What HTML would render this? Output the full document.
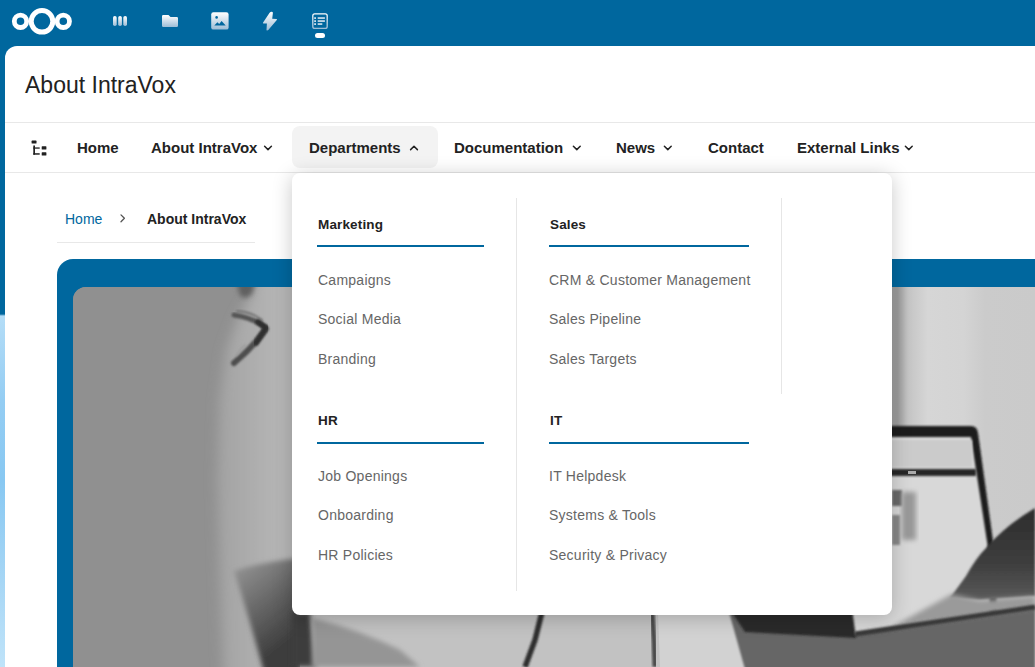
<!DOCTYPE html>
<html><head><meta charset="utf-8">
<style>
*{box-sizing:border-box;margin:0;padding:0}
html,body{width:1035px;height:667px;overflow:hidden;background:#00679e;font-family:"Liberation Sans",sans-serif}
#strip{position:absolute;left:0;top:0;width:5px;height:667px;background:linear-gradient(#00679e 0,#00679e 314px,#b4ddf7 316px,#94cdf3 400px,#88c8f2 480px,#a6d6f5 580px,#bfe3f9 667px)}
#hdr{position:absolute;left:0;top:0;width:1035px;height:46px;background:#00679e}
#main{position:absolute;left:5px;top:46px;width:1030px;height:621px;background:#fff;border-top-left-radius:12px;overflow:hidden}
.abs{position:absolute;white-space:nowrap}
#title{left:20px;top:24px;font-size:23px;color:#222;line-height:30px}
#line1{left:0;top:76px;width:1030px;height:1px;background:#e8e8e8}
#line2{left:0;top:126px;width:1030px;height:1px;background:#e8e8e8}
.nav{top:93px;font-size:15px;font-weight:700;color:#222;line-height:18px}
.chev{position:absolute;top:0}
#deptbg{left:287px;top:80px;width:146px;height:42px;background:#f3f3f3;border-radius:8px}
#crumbs{}
#hero{left:52px;top:213px;width:1100px;height:500px;background:#00679e;border-radius:16px}
#photo{left:68px;top:241px;width:1100px;height:500px;background:#8e8e8e;border-top-left-radius:13px;overflow:hidden}
#dd{position:absolute;left:292px;top:173px;width:600px;height:442px;background:#fff;border-radius:8px;box-shadow:0 3px 20px rgba(0,0,0,.22)}
.hd{position:absolute;font-size:13.5px;font-weight:700;color:#222;line-height:16px;letter-spacing:.15px}
.ul{position:absolute;height:2px;background:#00679e}
.it{position:absolute;font-size:14px;color:#666;line-height:17px;white-space:nowrap;letter-spacing:.25px}
.sep{position:absolute;width:1px;background:#e6e6e6}
</style></head><body>
<div id="strip"></div>
<div id="hdr">
<svg width="1035" height="46" style="position:absolute;left:0;top:0">
<defs><linearGradient id="ig" x1="0" y1="0" x2="0" y2="1"><stop offset="0" stop-color="#ffffff"/><stop offset="1" stop-color="#9dbdd6"/></linearGradient><linearGradient id="rbg" gradientUnits="userSpaceOnUse" x1="892" y1="0" x2="1035" y2="0"><stop offset="0" stop-color="#a0a0a0"/><stop offset="0.04" stop-color="#9c9c9c"/><stop offset="0.11" stop-color="#c4c4c4"/><stop offset="0.25" stop-color="#d6d6d6"/><stop offset="0.5" stop-color="#d4d4d4"/><stop offset="0.65" stop-color="#cbcbcb"/><stop offset="1" stop-color="#cacaca"/></linearGradient>
</defs>
<g fill="none" stroke="#fff">
<circle cx="42" cy="21.3" r="10.8" stroke-width="5"/>
<circle cx="20.5" cy="21.3" r="6.2" stroke-width="4.8"/>
<circle cx="63.3" cy="21.3" r="6.2" stroke-width="4.8"/>
</g>
<g fill="url(#ig)">
<rect x="113" y="16" width="3.7" height="10" rx="1.8"/>
<rect x="118.2" y="16" width="3.7" height="10" rx="1.8"/>
<rect x="123.3" y="16" width="3.7" height="10" rx="1.8"/>
</g>
<path d="M162 16.2 Q162 15 163.2 15 L168.5 15 L170.5 17 L176.8 17 Q178 17 178 18.2 L178 25.8 Q178 27 176.8 27 L163.2 27 Q162 27 162 25.8 Z" fill="url(#ig)"/>
<rect x="211.2" y="12.3" width="17.4" height="17.3" rx="2.2" fill="url(#ig)"/>
<circle cx="216.6" cy="17.4" r="1.3" fill="#00679e"/>
<path d="M214.3 25.6 L217.4 22.2 L219.2 24.1 L221.6 21 L225.7 25.6 Z" fill="#00679e"/>
<path d="M269.6 12.8 Q270.4 11.7 271.6 11.7 Q273 11.7 272.9 12.9 L272.2 18.7 L276.3 19 Q277.5 19.1 276.8 20 L268.3 30 Q267 31 266.5 29.9 L266.9 23.6 L263.6 23.5 Q262.5 23.4 263.1 22.6 Z" fill="url(#ig)"/>
<rect x="312.8" y="13.8" width="14.4" height="14.6" rx="2" fill="none" stroke="url(#ig)" stroke-width="1.3"/>
<g fill="#e6eef5">
<rect x="314.2" y="17.3" width="1.8" height="1.6"/>
<rect x="314.2" y="20.3" width="1.8" height="1.6"/>
<rect x="314.2" y="23.3" width="1.8" height="1.6"/>
<rect x="317.7" y="17.3" width="7.2" height="1.5"/>
<rect x="317.7" y="20.3" width="7.2" height="1.5"/>
<rect x="317.7" y="23.3" width="4.6" height="1.5"/>
</g>
<rect x="315" y="33" width="10" height="5" rx="2.5" fill="#fff"/>
</svg>
</div>
<div id="main">
  <div class="abs" id="title">About IntraVox</div>
  <div class="abs" id="line1"></div>
  <div class="abs" id="deptbg"></div>
  <div class="abs" id="line2"></div>
<svg class="abs" style="left:0;top:0" width="1030" height="130">
<g fill="#222">
<rect x="26.6" y="94.6" width="4.9" height="3" rx=".6"/>
<rect x="28.3" y="99.5" width="1.7" height="9.2"/>
<rect x="28.3" y="101.4" width="6.4" height="1.3"/>
<rect x="28.3" y="107.2" width="6.4" height="1.5"/>
<rect x="36.7" y="100.2" width="4.7" height="3.4" rx=".6"/>
<rect x="36.7" y="106.2" width="4.7" height="3.4" rx=".6"/>
</g>
<g fill="none" stroke="#222" stroke-width="1.5" stroke-linecap="round" stroke-linejoin="round">
<path d="M259.6 100.3 L263 103.6 L266.4 100.3"/>
<path d="M405.6 103.6 L409 100.2 L412.4 103.6"/>
<path d="M568.4 100.3 L571.8 103.6 L575.2 100.3"/>
<path d="M659.4 100.3 L662.8 103.6 L666.2 100.3"/>
<path d="M900.4 100.3 L903.8 103.6 L907.2 100.3"/>
</g>
</svg>
  <div class="abs nav" style="left:72px">Home</div>
  <div class="abs nav" style="left:146px">About IntraVox</div>
  <div class="abs nav" style="left:304px">Departments</div>
  <div class="abs nav" style="left:449px">Documentation</div>
  <div class="abs nav" style="left:611px">News</div>
  <div class="abs nav" style="left:703px">Contact</div>
  <div class="abs nav" style="left:792px">External Links</div>
  <div class="abs" style="left:60px;top:165px;font-size:14px;color:#00679e;line-height:17px">Home</div>
  <svg class="abs" style="left:110px;top:165px" width="12" height="17"><path d="M6 3.9 L9.4 7.3 L6 10.7" fill="none" stroke="#555" stroke-width="1.3" stroke-linecap="round" stroke-linejoin="round"/></svg>
  <div class="abs" style="left:142px;top:165px;font-size:14px;font-weight:700;color:#222;line-height:17px">About IntraVox</div>
  <div class="abs" style="left:52px;top:196px;width:198px;height:1px;background:#e8e8e8"></div>
  <div class="abs" id="hero"></div>
  <div class="abs" id="photo"><svg width="962" height="380" style="position:absolute;left:0;top:0">
<defs>
<filter id="b1" x="-20%" y="-20%" width="140%" height="140%"><feGaussianBlur stdDeviation="1.2"/></filter>
<filter id="b2" x="-20%" y="-20%" width="140%" height="140%"><feGaussianBlur stdDeviation="2.5"/></filter>
<filter id="b4" x="-50%" y="-20%" width="200%" height="140%"><feGaussianBlur stdDeviation="6"/></filter>
<linearGradient id="face" x1="0" y1="0" x2="1" y2="0"><stop offset="0" stop-color="#a2a2a2"/><stop offset="0.35" stop-color="#b8b8b8"/><stop offset="1" stop-color="#c4c4c4"/></linearGradient>
<linearGradient id="arm" x1="0" y1="0" x2="0" y2="1"><stop offset="0" stop-color="#2c2c2c"/><stop offset="0.6" stop-color="#3e3e3e"/><stop offset="1" stop-color="#5a5a5a"/></linearGradient>
<linearGradient id="hair" gradientUnits="userSpaceOnUse" x1="236" y1="570" x2="292" y2="640"><stop offset="0" stop-color="#909090"/><stop offset="0.45" stop-color="#6a6a6a"/><stop offset="1" stop-color="#3c3c3c"/></linearGradient>
<linearGradient id="rbg" gradientUnits="userSpaceOnUse" x1="892" y1="0" x2="1035" y2="0"><stop offset="0" stop-color="#a0a0a0"/><stop offset="0.04" stop-color="#9c9c9c"/><stop offset="0.11" stop-color="#c4c4c4"/><stop offset="0.25" stop-color="#d6d6d6"/><stop offset="0.5" stop-color="#d4d4d4"/><stop offset="0.65" stop-color="#cbcbcb"/><stop offset="1" stop-color="#cacaca"/></linearGradient>
</defs>
<g transform="translate(-73,-287)">
<rect x="73" y="287" width="962" height="380" fill="#909090"/>
<path d="M262 250 L250 296 L238 318 L226 350 L219 400 L217 480 L219 560 L224 700 L420 700 L420 250 Z" fill="url(#face)" filter="url(#b4)"/>
<path d="M236 280 L256 280 L252 294 L246 298 L240 296 Z" fill="#606060" filter="url(#b2)"/>
<path d="M234 315 Q251 317 265 327" fill="none" stroke="#555" stroke-width="5" stroke-linecap="round" filter="url(#b1)"/>
<path d="M237 311 Q252 312 262 320" fill="none" stroke="#707070" stroke-width="2" stroke-linecap="round" filter="url(#b1)"/>
<path d="M266 329 Q252 348 234 363" fill="none" stroke="#4e4e4e" stroke-width="6" stroke-linecap="round" filter="url(#b1)"/>
<path d="M258 322 L266 328 L256 343" fill="none" stroke="#2e2e2e" stroke-width="5.5" stroke-linecap="round" stroke-linejoin="round" filter="url(#b1)"/>
<path d="M236 356 Q242 346 246 345" fill="none" stroke="#9a9a9a" stroke-width="1.5" filter="url(#b1)"/>
<!-- hair bottom-left -->
<path d="M234 571 Q262 562 300 558 L300 680 L266 680 Q250 620 234 571 Z" fill="url(#hair)" filter="url(#b2)"/>
<!-- bottom desk area -->
<rect x="300" y="612" width="600" height="60" fill="#c2c2c2"/>
<path d="M292 612 L310 612 L316 667 L292 667 Z" fill="#3c3c3c" filter="url(#b2)"/>
<path d="M312 618 Q360 630 400 650 L420 667 L312 667 Z" fill="#959595" filter="url(#b2)"/>
<path d="M542 612 L535 640 L525 667" fill="none" stroke="#2e2e2e" stroke-width="5.5" filter="url(#b1)"/>
<path d="M652 612 L654 640 L655 667" fill="none" stroke="#4a4a4a" stroke-width="5" filter="url(#b1)"/>
<path d="M658 612 L742 612 L748 667 L660 667 Z" fill="#d2d2d2"/>
<!-- right region -->
<rect x="892" y="287" width="143" height="380" fill="url(#rbg)"/>
<!-- laptop -->
<path d="M840 426 L971 426 Q977 426 978 433 L994 548 L1000 680 L840 680 Z" fill="#1a1a1a" filter="url(#b1)"/>
<path d="M840 437 L971 437 L988 548 L992 680 L840 680 Z" fill="#d8d8d8" filter="url(#b1)"/>
<rect x="880" y="440" width="92" height="27" fill="#cbcbcb" filter="url(#b1)"/>
<rect x="880" y="469" width="96" height="7" fill="#262626" filter="url(#b1)"/>
<rect x="908" y="471" width="8" height="3" fill="#aaa"/>
<rect x="892" y="490" width="10" height="16" fill="#6a6a6a" filter="url(#b1)"/>
<rect x="902" y="492" width="14" height="48" fill="#999" filter="url(#b2)"/>
<rect x="892" y="515" width="8" height="30" fill="#888" filter="url(#b1)"/>
<!-- arm -->
<path d="M729 612 L852 634 L1035 606 L1035 680 L748 680 Z" fill="#666" filter="url(#b1)"/>
<path d="M729 608 L852 608 L856 638 L745 632 Z" fill="#2c2c2c" filter="url(#b1)"/>
<path d="M950 598 L966 576 Q976 558 986 548 Q1005 526 1035 508 L1035 596 L980 600 Z" fill="url(#arm)" filter="url(#b1)"/>
<path d="M852 634 L890 628 L952 594 L980 600 L1035 596 L1035 608 Z" fill="#9a9a9a" filter="url(#b2)"/>
<path d="M855 634 L1035 607" stroke="#383838" stroke-width="5" filter="url(#b1)"/>
</g>
</svg></div>
</div>
<div id="dd">
  <div class="hd" style="left:26px;top:44px">Marketing</div>
  <div class="ul" style="left:25px;top:72px;width:167px"></div>
  <div class="it" style="left:26px;top:99px">Campaigns</div>
  <div class="it" style="left:26px;top:138px">Social Media</div>
  <div class="it" style="left:26px;top:178px">Branding</div>
  <div class="hd" style="left:26px;top:240px">HR</div>
  <div class="ul" style="left:25px;top:269px;width:167px"></div>
  <div class="it" style="left:26px;top:295px">Job Openings</div>
  <div class="it" style="left:26px;top:334px">Onboarding</div>
  <div class="it" style="left:26px;top:374px">HR Policies</div>
  <div class="sep" style="left:224px;top:25px;height:393px"></div>
  <div class="hd" style="left:258px;top:44px">Sales</div>
  <div class="ul" style="left:257px;top:72px;width:200px"></div>
  <div class="it" style="left:257px;top:99px">CRM &amp; Customer Management</div>
  <div class="it" style="left:257px;top:138px">Sales Pipeline</div>
  <div class="it" style="left:257px;top:178px">Sales Targets</div>
  <div class="hd" style="left:258px;top:240px">IT</div>
  <div class="ul" style="left:257px;top:269px;width:200px"></div>
  <div class="it" style="left:257px;top:295px">IT Helpdesk</div>
  <div class="it" style="left:257px;top:334px">Systems &amp; Tools</div>
  <div class="it" style="left:257px;top:374px">Security &amp; Privacy</div>
  <div class="sep" style="left:489px;top:25px;height:196px"></div>
</div>
</body></html>
